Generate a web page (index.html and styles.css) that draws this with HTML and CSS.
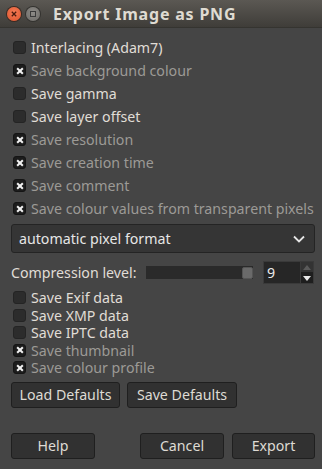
FILE: index.html
```html
<!DOCTYPE html>
<html>
<head>
<meta charset="utf-8">
<link rel="stylesheet" href="styles.css">
</head>
<body>
<div class="window">
  <div class="titlebar">
    <span class="wbtn close"><svg width="14" height="14" viewBox="0 0 14 14"><path d="M4.8 4.8 L9.2 9.2 M9.2 4.8 L4.8 9.2" stroke="#4a1a0e" stroke-width="1.3" fill="none"/></svg></span>
    <span class="wbtn mini"><svg width="14" height="14" viewBox="0 0 14 14"><rect x="4.5" y="4.5" width="5" height="5" stroke="#3a3a3a" stroke-width="1" fill="none"/></svg></span>
    <span class="title">Export Image as PNG</span>
  </div>
  <div class="content">
    <div class="group1">
      <div class="row"><span class="cb"></span><span class="lbl">Interlacing (Adam7)</span></div>
      <div class="row dim"><span class="cb on"></span><span class="lbl">Save background colour</span></div>
      <div class="row"><span class="cb"></span><span class="lbl">Save gamma</span></div>
      <div class="row"><span class="cb"></span><span class="lbl">Save layer offset</span></div>
      <div class="row dim"><span class="cb on"></span><span class="lbl">Save resolution</span></div>
      <div class="row dim"><span class="cb on"></span><span class="lbl">Save creation time</span></div>
      <div class="row dim"><span class="cb on"></span><span class="lbl">Save comment</span></div>
      <div class="row dim"><span class="cb on"></span><span class="lbl">Save colour values from transparent pixels</span></div>
    </div>
    <div class="combo">
      <span>automatic pixel format</span>
      <svg width="14" height="10" viewBox="0 0 14 10"><path d="M2 2.5 L7 7.5 L12 2.5" stroke="#e6e6e6" stroke-width="1.8" fill="none"/></svg>
    </div>
    <div class="comp">
      <span class="lbl">Compression level:</span>
      <div class="trough"><span class="handle"></span></div>
      <div class="spin">
        <span class="val">9</span>
        <div class="arrows">
          <span class="up"><svg width="8" height="5" viewBox="0 0 8 5"><path d="M0 5 L4 0 L8 5 Z" fill="#5a5a5a"/></svg></span>
          <span class="down"><svg width="8" height="5" viewBox="0 0 8 5"><path d="M0 0 L4 5 L8 0 Z" fill="#e8e8e8"/></svg></span>
        </div>
      </div>
    </div>
    <div class="group2">
      <div class="row2"><span class="cb"></span><span class="lbl">Save Exif data</span></div>
      <div class="row2"><span class="cb"></span><span class="lbl">Save XMP data</span></div>
      <div class="row2"><span class="cb"></span><span class="lbl">Save IPTC data</span></div>
      <div class="row2 dim"><span class="cb on"></span><span class="lbl">Save thumbnail</span></div>
      <div class="row2 dim"><span class="cb on"></span><span class="lbl">Save colour profile</span></div>
    </div>
    <div class="defaults">
      <button class="btn w-load">Load Defaults</button>
      <button class="btn w-save">Save Defaults</button>
    </div>
    <div class="actions">
      <button class="btn w-help">Help</button>
      <div class="right">
        <button class="btn w-cancel">Cancel</button>
        <button class="btn w-export">Export</button>
      </div>
    </div>
  </div>
</div>
</body>
</html>
```
FILE: styles.css
```css
* { box-sizing: border-box; }
html, body { margin: 0; padding: 0; }
body {
  width: 322px;
  height: 469px;
  background: #454545;
  font-family: "Noto Sans", "DejaVu Sans", sans-serif;
  font-size: 14.2px;
  color: #e0ddd6;
  overflow: hidden;
}
.window { width: 322px; height: 469px; }
.titlebar {
  height: 28px;
  background: linear-gradient(#5b5853, #3f3d39);
  display: flex;
  align-items: center;
  padding-left: 7px;
  border-bottom: 1px solid #353430;
}
.wbtn {
  width: 14px;
  height: 14px;
  border-radius: 50%;
  display: flex;
  margin-right: 5px;
}
.close { background: radial-gradient(circle at 50% 40%, #f57c56, #e0532c); box-shadow: 0 0 0 1px #3a2a22; }
.mini { background: radial-gradient(circle at 50% 40%, #8e8c88, #6b6965); box-shadow: 0 0 0 1px #33322f; }
.title {
  margin-left: 8px;
  font-weight: bold;
  font-size: 16px;
  color: #dfdbd2;
  letter-spacing: 0.8px;
}
.content { padding: 0 7px 0 11px; }
.group1 { padding-top: 8px; }
.row, .row2 {
  display: flex;
  align-items: center;
  height: 23px;
  padding-left: 2px;
}
.row2 { height: 17.5px; }
.cb {
  width: 13px;
  height: 13px;
  border-radius: 3px;
  background: #2c2c2c;
  border: 1px solid #242424;
  margin-right: 5px;
  flex: none;
  position: relative;
}
.cb.on { background: #1c1c1c; border-color: #151515; }
.cb.on::before, .cb.on::after {
  content: "";
  position: absolute;
  left: 1.5px;
  top: 4.5px;
  width: 8px;
  height: 2px;
  background: #f2f2f2;
  transform: rotate(45deg);
}
.cb.on::after { transform: rotate(-45deg); }
.lbl { white-space: nowrap; }
.dim .lbl { color: #9c9a96; }
.combo {
  margin-top: 4px;
  height: 29px;
  width: 304px;
  background: #353535;
  border: 1px solid #242424;
  border-radius: 3px;
  display: flex;
  align-items: center;
  justify-content: space-between;
  padding: 0 8px 0 7px;
  color: #e6e6e6;
}
.comp {
  display: flex;
  align-items: center;
  height: 33px;
  margin-top: 3px;
}
.comp .lbl { width: 135px; }
.trough {
  width: 107px;
  height: 13px;
  background: #2a2a2a;
  display: flex;
  justify-content: flex-end;
  align-items: center;
}
.handle {
  width: 11px;
  height: 12px;
  background: #6a6a6a;
  border-radius: 2px;
  border: 1px solid #555;
}
.spin {
  margin-left: 10px;
  width: 51px;
  height: 23px;
  display: flex;
  background: #262626;
  border: 1px solid #3a3a3a;
}
.val { flex: 1; padding-left: 3px; line-height: 21px; color: #eaeaea; }
.arrows {
  width: 13px;
  display: flex;
  flex-direction: column;
  border-left: 1px solid #3a3a3a;
}
.arrows span { flex: 1; display: flex; align-items: center; justify-content: center; }
.up { background: #333; border-bottom: 1px solid #1f1f1f; }
.down { background: #1e1e1e; }
.group2 { margin-top: 0px; }
.btn {
  font-family: inherit;
  font-size: 14.2px;
  color: #dedbd4;
  background: #313131;
  border: 1px solid #1f1f1f;
  border-radius: 3px;
  height: 26px;
  padding: 0;
  margin: 0;
}
.defaults { display: flex; gap: 7px; margin-top: 5px; }
.w-load { width: 109px; }
.w-save { width: 110px; }
.actions { display: flex; justify-content: space-between; margin-top: 25px; width: 304px; }
.right { display: flex; gap: 8px; }
.w-help { width: 84px; }
.w-cancel { width: 84px; }
.w-export { width: 83px; }
```
